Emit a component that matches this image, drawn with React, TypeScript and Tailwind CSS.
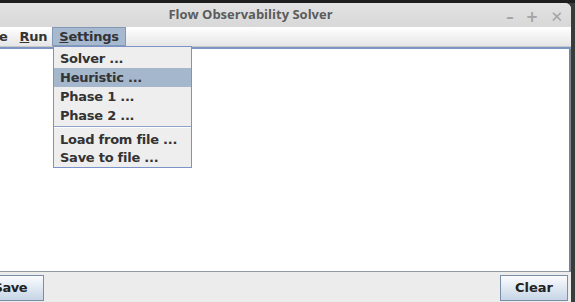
import React from "react";

const menuFont = { fontFamily: '"DejaVu Sans", sans-serif' };

export default function App() {
  return (
    <div className="relative w-[575px] h-[302px] overflow-hidden bg-[#3b3b3b]" style={menuFont}>
      <div className="h-[3px] bg-[#1e1e1e]" />
      <div className="flex flex-col w-[571px] h-[299px] rounded-tr-[6px] overflow-hidden bg-[#ececec]">
        {/* title bar */}
        <div className="relative h-[24px] flex items-center justify-center bg-gradient-to-b from-[#e2e2e2] to-[#d8d8d8]">
          <span
            className="text-[13px] font-bold text-[#5c5c5c]"
            style={{ fontFamily: '"Open Sans", sans-serif', marginLeft: "-70px" }}
          >
            Flow Observability Solver
          </span>
          <div className="absolute right-[8px] top-[3px] flex items-center gap-[12px] text-[#a4a4a4] font-bold text-[15px]">
            <span>–</span>
            <span>+</span>
            <span>✕</span>
          </div>
        </div>
        {/* menu bar */}
        <div className="h-[20px] flex items-center bg-gradient-to-b from-[#ffffff] to-[#e6e6e6] border-b border-[#c8c8c8] text-[13px] font-bold text-[#333] tracking-[-0.25px]">
          <span className="ml-[-1px]">e</span>
          <span className="ml-[12px]">
            <span className="underline">R</span>un
          </span>
          <span className="ml-[5px] h-[19px] px-[6px] flex items-center bg-[#a7b9cf] border border-[#8298b6]">
            <span className="underline">S</span>ettings
          </span>
        </div>
        {/* text area */}
        <div className="flex-1 flex flex-col bg-[#ececec]">
          <div className="h-[2px] bg-[#7d95c2]" />
          <div className="flex-1 bg-white border-r-2 border-[#7b8590] border-b border-b-[#8f99a3]" />
          <div className="h-[30px] flex items-center justify-between pt-[1px]">
            <button className="h-[26px] w-[46px] ml-[-2px] border border-[#7a8ea8] bg-gradient-to-b from-[#fbfcfe] to-[#c6d5e6] text-[13px] font-bold text-[#222] tracking-[-0.5px] flex items-center justify-end pr-[16px]">
              Save
            </button>
            <button className="h-[26px] w-[68px] mr-[3px] border border-[#7a8ea8] bg-gradient-to-b from-[#fbfcfe] to-[#c6d5e6] text-[13px] font-bold text-[#222] flex items-center justify-center">
              Clear
            </button>
          </div>
        </div>
      </div>
      {/* dropdown */}
      <div className="absolute left-[53px] top-[46px] w-[139px] border border-[#7b93c8] bg-[#eeeeee] text-[13px] font-bold text-[#333] tracking-[-0.25px] pt-[2px]">
        <div className="h-[19px] flex items-center pl-[6px]">Solver ...</div>
        <div className="h-[19px] flex items-center pl-[6px] bg-[#a5b7cd]">Heuristic ...</div>
        <div className="h-[19px] flex items-center pl-[6px]">Phase 1 ...</div>
        <div className="h-[19px] flex items-center pl-[6px]">Phase 2 ...</div>
        <div className="mt-[1px] mb-[2px] h-[2px] border-t border-[#8fa3c9] border-b border-b-white" />
        <div className="h-[19px] flex items-center pl-[6px]">Load from file ...</div>
        <div className="h-[18px] flex items-center pl-[6px]">Save to file ...</div>
      </div>
    </div>
  );
}
